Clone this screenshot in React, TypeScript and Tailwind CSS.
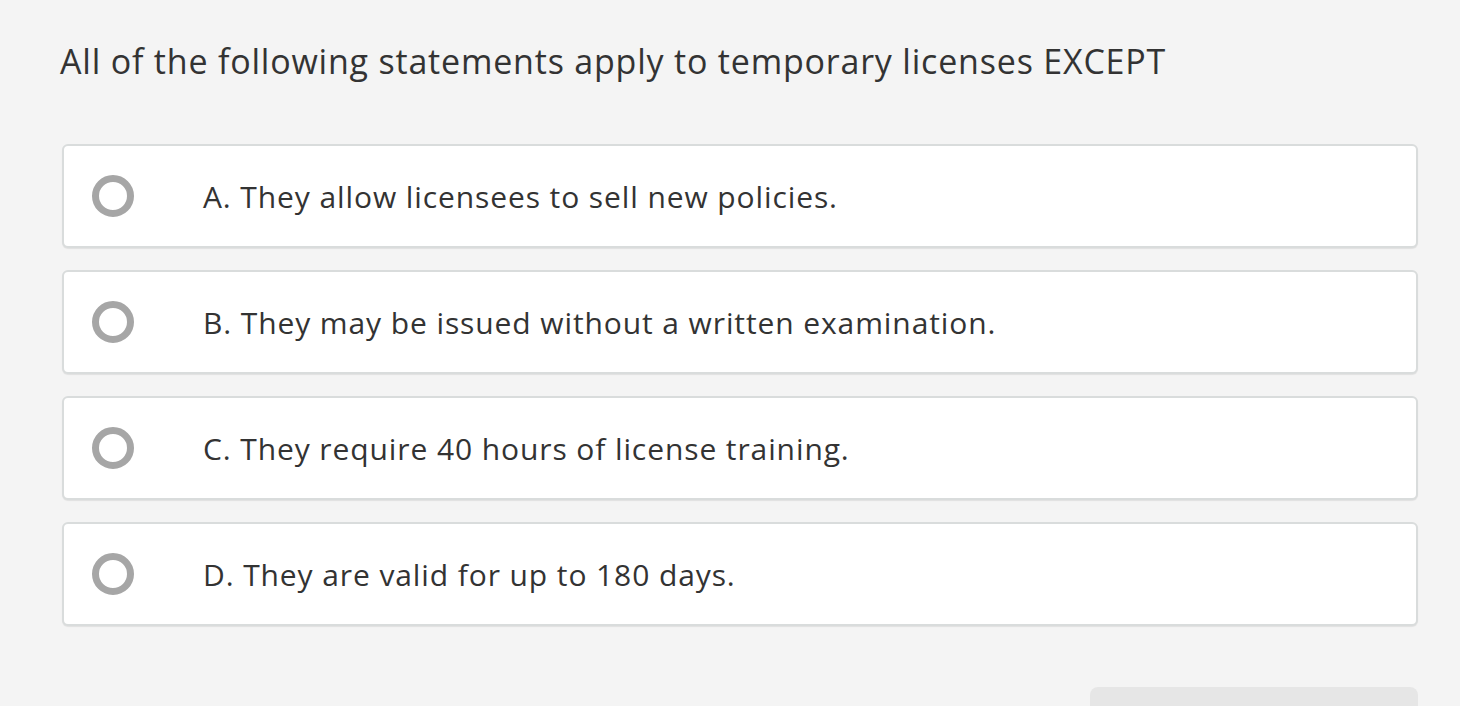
const options = [
  'A. They allow licensees to sell new policies.',
  'B. They may be issued without a written examination.',
  'C. They require 40 hours of license training.',
  'D. They are valid for up to 180 days.',
];

function Radio() {
  return (
    <span className="block w-[42px] h-[42px] rounded-full border-[7px] border-[#a6a6a6] shrink-0" />
  );
}

export default function App() {
  return (
    <div
      className="h-[706px] bg-[#f4f4f4] pl-[60px] pr-[42px] pt-[38px] overflow-hidden"
      style={{ fontFamily: '"Open Sans", sans-serif' }}
    >
      <h1 className="text-[34px] leading-[46px] tracking-[0.8px] text-[#333333]">
        All of the following statements apply to temporary licenses EXCEPT
      </h1>

      <div className="mt-[60px] ml-[2px] flex flex-col gap-[22px]">
        {options.map(opt => (
          <div
            key={opt}
            className="h-[104px] bg-white border-2 border-[#d9dcdc] rounded-[6px] shadow-[0_1px_1px_rgba(0,0,0,0.08)] flex items-center pl-[28px]"
          >
            <Radio />
            <span className="ml-[69px] text-[30px] tracking-[0.9px] text-[#333333]">{opt}</span>
          </div>
        ))}
      </div>

      <div className="flex justify-end mt-[61px]">
        <div className="w-[328px] h-[60px] bg-[#e6e6e6] rounded-[8px]" />
      </div>
    </div>
  );
}
